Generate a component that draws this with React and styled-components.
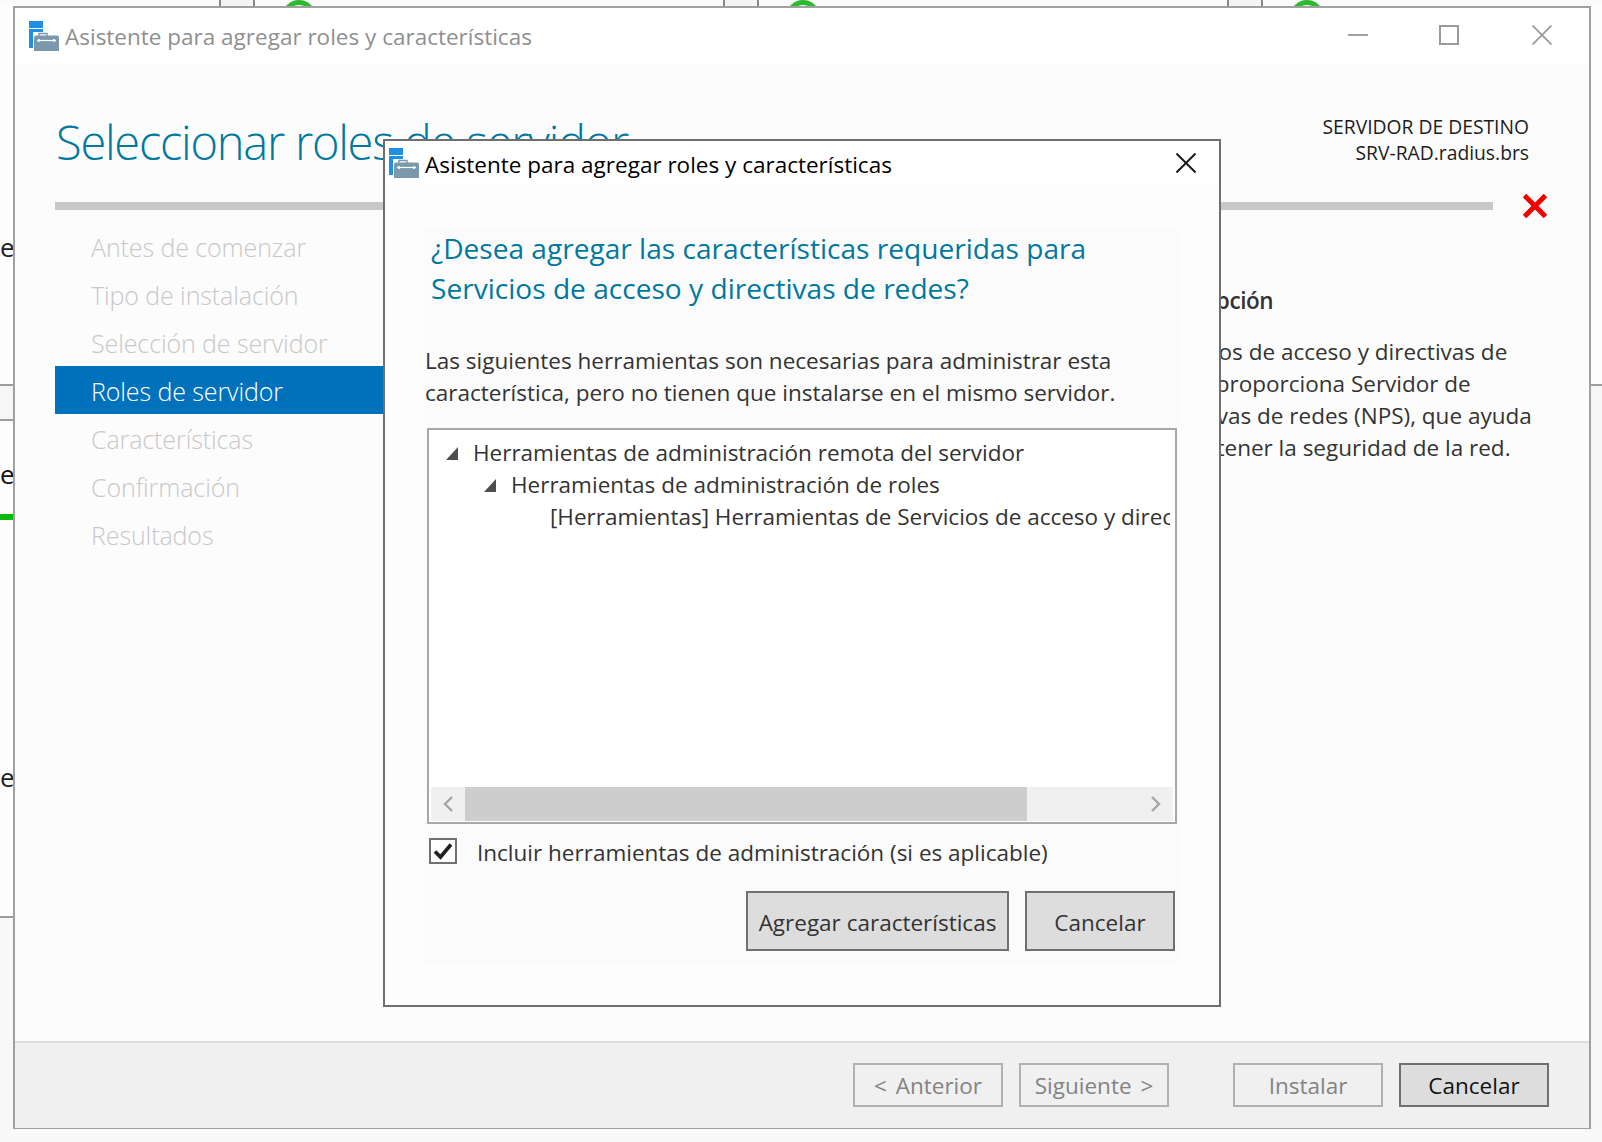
import React from "react";
import styled, { createGlobalStyle } from "styled-components";

const GlobalStyle = createGlobalStyle`
  html, body { margin: 0; padding: 0; background: #fbfbfb; }
  body { font-family: "Open Sans", "Noto Sans", sans-serif; color: #333; }
`;

const Page = styled.div`
  position: relative;
  width: 1602px;
  height: 1142px;
  overflow: hidden;
  background: #f9f9f9;
`;

/* what peeks out behind the wizard window */
const TopStrip = styled.div`
  display: flex;
  height: 6px;
  padding-left: 219px;
  overflow: hidden;
  background: #fbfbfb;
`;

const Tile = styled.div`
  display: flex;
  flex: none;
  width: 504px;
`;

const TileCell = styled.div`
  width: 36px;
  height: 6px;
  box-sizing: border-box;
  border-left: 2px solid #8a8a8a;
  border-right: 2px solid #8a8a8a;
  background: #f4f4f4;
`;

const TileCircle = styled.div`
  width: 34px;
  height: 34px;
  margin-left: 27px;
  box-sizing: border-box;
  border: 5px solid #2dbb2d;
  border-radius: 50%;
`;

const Row = styled.div`
  display: flex;
  height: 1123px;
`;

const LeftStrip = styled.div`
  flex: none;
  width: 13px;
  display: flex;
  flex-direction: column;
  overflow: hidden;
`;

const Segment = styled.div`
  height: ${(p) => p.$h}px;
  box-sizing: border-box;
  background: ${(p) => p.$bg || "#fdfdfd"};
  border-top: ${(p) => (p.$line ? "2px solid #9c9c9c" : "none")};
  border-bottom: ${(p) => (p.$lineBottom ? "2px solid #9c9c9c" : "none")};
  padding-top: ${(p) => p.$pad || 0}px;
`;

const Clipped = styled.div`
  height: 28px;
  margin-top: ${(p) => p.$mt || 0}px;
  font-size: 26px;
  line-height: 28px;
  color: ${(p) => p.$color || "#111"};
  text-align: right;
`;

const GreenBar = styled.div`
  height: 6px;
  margin-top: ${(p) => p.$mt}px;
  background: #0bb90b;
`;

const RightStrip = styled.div`
  flex: none;
  width: 11px;
  display: flex;
  flex-direction: column;
`;

/* wizard window */
const Window = styled.div`
  flex: none;
  width: 1578px;
  height: 1123px;
  box-sizing: border-box;
  display: flex;
  flex-direction: column;
  border: 2px solid #a0a0a0;
  border-bottom-width: 1px;
  background: #fcfcfc;
`;

const TitleBar = styled.div`
  flex: none;
  display: flex;
  align-items: center;
  height: 56px;
  padding: 0 37px 0 14px;
  background: #fff;
`;

const TitleText = styled.span`
  margin-left: 6px;
  font-size: 22.5px;
  color: #8f8f8f;
`;

const Controls = styled.div`
  display: flex;
  gap: 71px;
  margin-left: auto;
  margin-top: -3px;
`;

const WindowClose = styled.div`
  display: flex;
  margin-left: 2px;
`;

const Header = styled.div`
  flex: none;
  display: flex;
  justify-content: space-between;
  height: 138px;
  padding: 0 60px 0 40px;
  box-sizing: border-box;
`;

const PageTitle = styled.h1`
  margin: 48px 0 0 1px;
  font-size: 47px;
  line-height: 60px;
  font-weight: 300;
  letter-spacing: -1.25px;
  color: #00789f;
  white-space: nowrap;
`;

const ServerInfo = styled.div`
  margin-top: 50px;
  font-size: 19.3px;
  line-height: 26px;
  color: #1c1c1c;
  text-align: right;
`;

const ProgressRow = styled.div`
  flex: none;
  display: flex;
  align-items: center;
  height: 8px;
  padding: 0 42px 0 40px;
`;

const ProgressBar = styled.div`
  width: 1438px;
  height: 8px;
  margin-right: 30px;
  background: #c8c8c8;
`;

const Columns = styled.div`
  flex: 1;
  display: flex;
  min-height: 0;
`;

const Nav = styled.nav`
  flex: none;
  width: 340px;
  margin: 12px 0 0 40px;
`;

const NavItem = styled.div`
  height: 48px;
  padding-left: 36px;
  font-size: 25px;
  line-height: 50px;
  font-weight: 300;
  letter-spacing: -0.1px;
  color: ${(p) => (p.$active ? "#fff" : "#c8c8c8")};
  background: ${(p) => (p.$active ? "#0072bc" : "transparent")};
  white-space: nowrap;
`;

const Aside = styled.aside`
  margin: 75px 0 0 756px;
  font-size: 22.5px;
  line-height: 32px;
  color: #333;
  white-space: nowrap;
`;

const AsideTitle = styled.div`
  margin-bottom: 19px;
  font-weight: 600;
  letter-spacing: -0.45px;
`;

const Footer = styled.div`
  flex: none;
  display: flex;
  align-items: center;
  justify-content: flex-end;
  height: 87px;
  box-sizing: border-box;
  padding: 0 40px 1px 0;
  border-top: 2px solid #dcdcdc;
  background: #f0f0f0;
`;

const WizardButton = styled.div`
  width: 150px;
  height: 44px;
  box-sizing: border-box;
  margin-left: ${(p) => p.$gap}px;
  padding-top: 1px;
  display: flex;
  align-items: center;
  justify-content: center;
  border: 2px solid ${(p) => (p.$primary ? "#707070" : "#adb2b5")};
  background: ${(p) => (p.$primary ? "#dddddd" : "transparent")};
  color: ${(p) => (p.$primary ? "#111" : "#838383")};
  font-size: 22.5px;
  word-spacing: 3px;
`;

/* modal */
const Dialog = styled.div`
  position: absolute;
  left: 383px;
  top: 139px;
  width: 838px;
  height: 868px;
  box-sizing: border-box;
  display: flex;
  flex-direction: column;
  border: 2px solid #6f6f6f;
  background: #fdfdfd;
`;

const DialogBar = styled.div`
  flex: none;
  display: flex;
  align-items: center;
  height: 43px;
  padding: 0 23px 0 4px;
  background: #fff;
`;

const DialogTitle = styled.span`
  margin: 4px 0 0 6px;
  font-size: 22.5px;
  color: #000;
`;

const DialogClose = styled.div`
  display: flex;
  margin-left: auto;
`;

const Panel = styled.div`
  width: 754px;
  height: 737px;
  margin: 43px 0 0 40px;
  background: #fbfbfb;
`;

const Question = styled.h2`
  margin: 0;
  padding: 1px 0 0 6px;
  font-size: 28.1px;
  line-height: 40px;
  font-weight: 400;
  color: #00789f;
  white-space: nowrap;
`;

const Notice = styled.p`
  margin: 37px 0 0;
  font-size: 22.5px;
  line-height: 32px;
  color: #333;
  white-space: nowrap;
`;

const Tree = styled.div`
  width: 750px;
  height: 396px;
  box-sizing: border-box;
  display: flex;
  flex-direction: column;
  margin: 19px 0 0 2px;
  padding: 0 2px 1px;
  border: 2px solid #a8a8a8;
  background: #fff;
`;

const TreeRows = styled.div`
  flex: 1;
  margin-right: 3px;
  padding-top: 7px;
  overflow: hidden;
`;

const TreeRow = styled.div`
  display: flex;
  align-items: center;
  gap: 15px;
  height: 32px;
  padding-left: ${(p) => p.$indent}px;
  font-size: 22.5px;
  line-height: 32px;
  color: #333;
  white-space: nowrap;
`;

const ScrollBar = styled.div`
  flex: none;
  display: flex;
  align-items: center;
  justify-content: space-between;
  height: 34px;
  background: #f0f0f0;
`;

const ScrollArrow = styled.div`
  display: flex;
  justify-content: center;
  width: 34px;
`;

const ScrollThumb = styled.div`
  width: 562px;
  height: 34px;
  margin-right: auto;
  background: #cdcdcd;
`;

const CheckRow = styled.div`
  display: flex;
  align-items: center;
  gap: 20px;
  height: 26px;
  margin: 15px 0 0 4px;
  font-size: 22.5px;
  color: #333;
`;

const CheckBox = styled.div`
  flex: none;
  display: flex;
  align-items: center;
  justify-content: center;
  width: 28px;
  height: 26px;
  box-sizing: border-box;
  margin-top: -2px;
  border: 2px solid #707070;
  background: #fff;
`;

const DialogActions = styled.div`
  display: flex;
  justify-content: flex-end;
  gap: 16px;
  margin: 26px 4px 0 0;
`;

const ActionButton = styled.div`
  width: ${(p) => p.$w}px;
  height: 60px;
  box-sizing: border-box;
  padding-top: 2px;
  display: flex;
  align-items: center;
  justify-content: center;
  border: 2px solid #707070;
  background: #dddddd;
  font-size: 22.5px;
  color: #333;
`;

const RoleIcon = () => (
  <svg width="30" height="30" viewBox="0 0 30 30">
    <rect x="0" y="0" width="14" height="7" fill="#1e8fe1" />
    <rect x="0" y="8" width="14" height="19" fill="#1e8fe1" />
    <rect x="4" y="11" width="26" height="19" fill="#fff" />
    <path d="M10 15v-2.5h8V15" fill="none" stroke="#7b98ad" strokeWidth="1.4" />
    <path d="M5 16.5q0-2 2-2h21q2 0 2 2V30H5z" fill="#7b98ad" />
    <path d="M8 19.5h19" stroke="#fff" strokeWidth="1.2" />
    <path d="M10 18v3M25 18v3" stroke="#fff" strokeWidth="1.6" />
  </svg>
);

const CrossIcon = ({ color, width = 1.8 }) => (
  <svg width="20" height="20" viewBox="0 0 20 20">
    <path d="M0.5 0.5l19 19M19.5 0.5l-19 19" stroke={color} strokeWidth={width} fill="none" />
  </svg>
);

const MinimizeIcon = () => (
  <svg width="20" height="20" viewBox="0 0 20 20">
    <path d="M0 10h20" stroke="#a0a0a0" strokeWidth="2" />
  </svg>
);

const MaximizeIcon = () => (
  <svg width="20" height="20" viewBox="0 0 20 20">
    <rect x="1" y="1" width="18" height="18" fill="none" stroke="#9a9a9a" strokeWidth="2" />
  </svg>
);

const RedCross = () => (
  <svg width="24" height="24" viewBox="0 0 24 24">
    <path d="M1.5 1.5l21 21M22.5 1.5l-21 21" stroke="#f00000" strokeWidth="5" fill="none" />
  </svg>
);

const Expander = () => (
  <svg width="12" height="13" viewBox="0 0 12 13" style={{ flex: "none" }}>
    <polygon points="12,0 12,13 0,13" fill="#4e4e4e" />
  </svg>
);

const Chevron = ({ left }) => (
  <svg width="10" height="16" viewBox="0 0 10 16">
    <path d={left ? "M9 1L2 8l7 7" : "M1 1l7 7-7 7"} fill="none" stroke="#a6a6a6" strokeWidth="2.4" />
  </svg>
);

const CheckMark = () => (
  <svg width="20" height="18" viewBox="0 0 20 18">
    <path d="M2 9.5l5.5 5.5L18 2.5" fill="none" stroke="#1f1f1f" strokeWidth="3.6" />
  </svg>
);

const NAV_ITEMS = [
  "Antes de comenzar",
  "Tipo de instalación",
  "Selección de servidor",
  "Roles de servidor",
  "Características",
  "Confirmación",
  "Resultados",
];

export default function App() {
  return (
    <Page>
      <GlobalStyle />
      <TopStrip>
        {[0, 1, 2].map((i) => (
          <Tile key={i}>
            <TileCell />
            <TileCircle />
          </Tile>
        ))}
      </TopStrip>
      <Row>
        <LeftStrip>
          <Segment $h={378} $pad={227}>
            <Clipped $color="#222">e</Clipped>
          </Segment>
          <Segment $h={37} $bg="#f6f6f6" $line $lineBottom />
          <Segment $h={495} $pad={39}>
            <Clipped>e</Clipped>
            <GreenBar $mt={26} />
            <Clipped $mt={243} $color="#222">e</Clipped>
          </Segment>
          <Segment $h={213} $bg="#f8f8f8" $line />
        </LeftStrip>
        <Window>
          <TitleBar>
            <RoleIcon />
            <TitleText>Asistente para agregar roles y características</TitleText>
            <Controls>
              <MinimizeIcon />
              <MaximizeIcon />
              <WindowClose>
                <CrossIcon color="#9a9a9a" />
              </WindowClose>
            </Controls>
          </TitleBar>
          <Header>
            <PageTitle>Seleccionar roles de servidor</PageTitle>
            <ServerInfo>
              SERVIDOR DE DESTINO
              <br />
              SRV-RAD.radius.brs
            </ServerInfo>
          </Header>
          <ProgressRow>
            <ProgressBar />
            <RedCross />
          </ProgressRow>
          <Columns>
            <Nav>
              {NAV_ITEMS.map((item, i) => (
                <NavItem key={item} $active={i === 3}>
                  {item}
                </NavItem>
              ))}
            </Nav>
            <Aside>
              <AsideTitle>Descripción</AsideTitle>
              Servicios de acceso y directivas de
              <br />
              redes proporciona Servidor de
              <br />
              directivas de redes (NPS), que ayuda
              <br />
              a mantener la seguridad de la red.
            </Aside>
          </Columns>
          <Footer>
            <WizardButton>&lt; Anterior</WizardButton>
            <WizardButton $gap={16}>Siguiente &gt;</WizardButton>
            <WizardButton $gap={64}>Instalar</WizardButton>
            <WizardButton $gap={16} $primary>
              Cancelar
            </WizardButton>
          </Footer>
        </Window>
        <RightStrip>
          <Segment $h={378} />
          <Segment $h={745} $bg="#f6f6f6" $line />
        </RightStrip>
      </Row>
      <Dialog>
        <DialogBar>
          <RoleIcon />
          <DialogTitle>Asistente para agregar roles y características</DialogTitle>
          <DialogClose>
            <CrossIcon color="#1a1a1a" width={2} />
          </DialogClose>
        </DialogBar>
        <Panel>
          <Question>
            ¿Desea agregar las características requeridas para
            <br />
            Servicios de acceso y directivas de redes?
          </Question>
          <Notice>
            Las siguientes herramientas son necesarias para administrar esta
            <br />
            característica, pero no tienen que instalarse en el mismo servidor.
          </Notice>
          <Tree>
            <TreeRows>
              <TreeRow $indent={15}>
                <Expander />
                Herramientas de administración remota del servidor
              </TreeRow>
              <TreeRow $indent={53}>
                <Expander />
                Herramientas de administración de roles
              </TreeRow>
              <TreeRow $indent={119}>
                [Herramientas] Herramientas de Servicios de acceso y directivas de redes
              </TreeRow>
            </TreeRows>
            <ScrollBar>
              <ScrollArrow>
                <Chevron left />
              </ScrollArrow>
              <ScrollThumb />
              <ScrollArrow>
                <Chevron />
              </ScrollArrow>
            </ScrollBar>
          </Tree>
          <CheckRow>
            <CheckBox>
              <CheckMark />
            </CheckBox>
            Incluir herramientas de administración (si es aplicable)
          </CheckRow>
          <DialogActions>
            <ActionButton $w={263}>Agregar características</ActionButton>
            <ActionButton $w={150}>Cancelar</ActionButton>
          </DialogActions>
        </Panel>
      </Dialog>
    </Page>
  );
}
